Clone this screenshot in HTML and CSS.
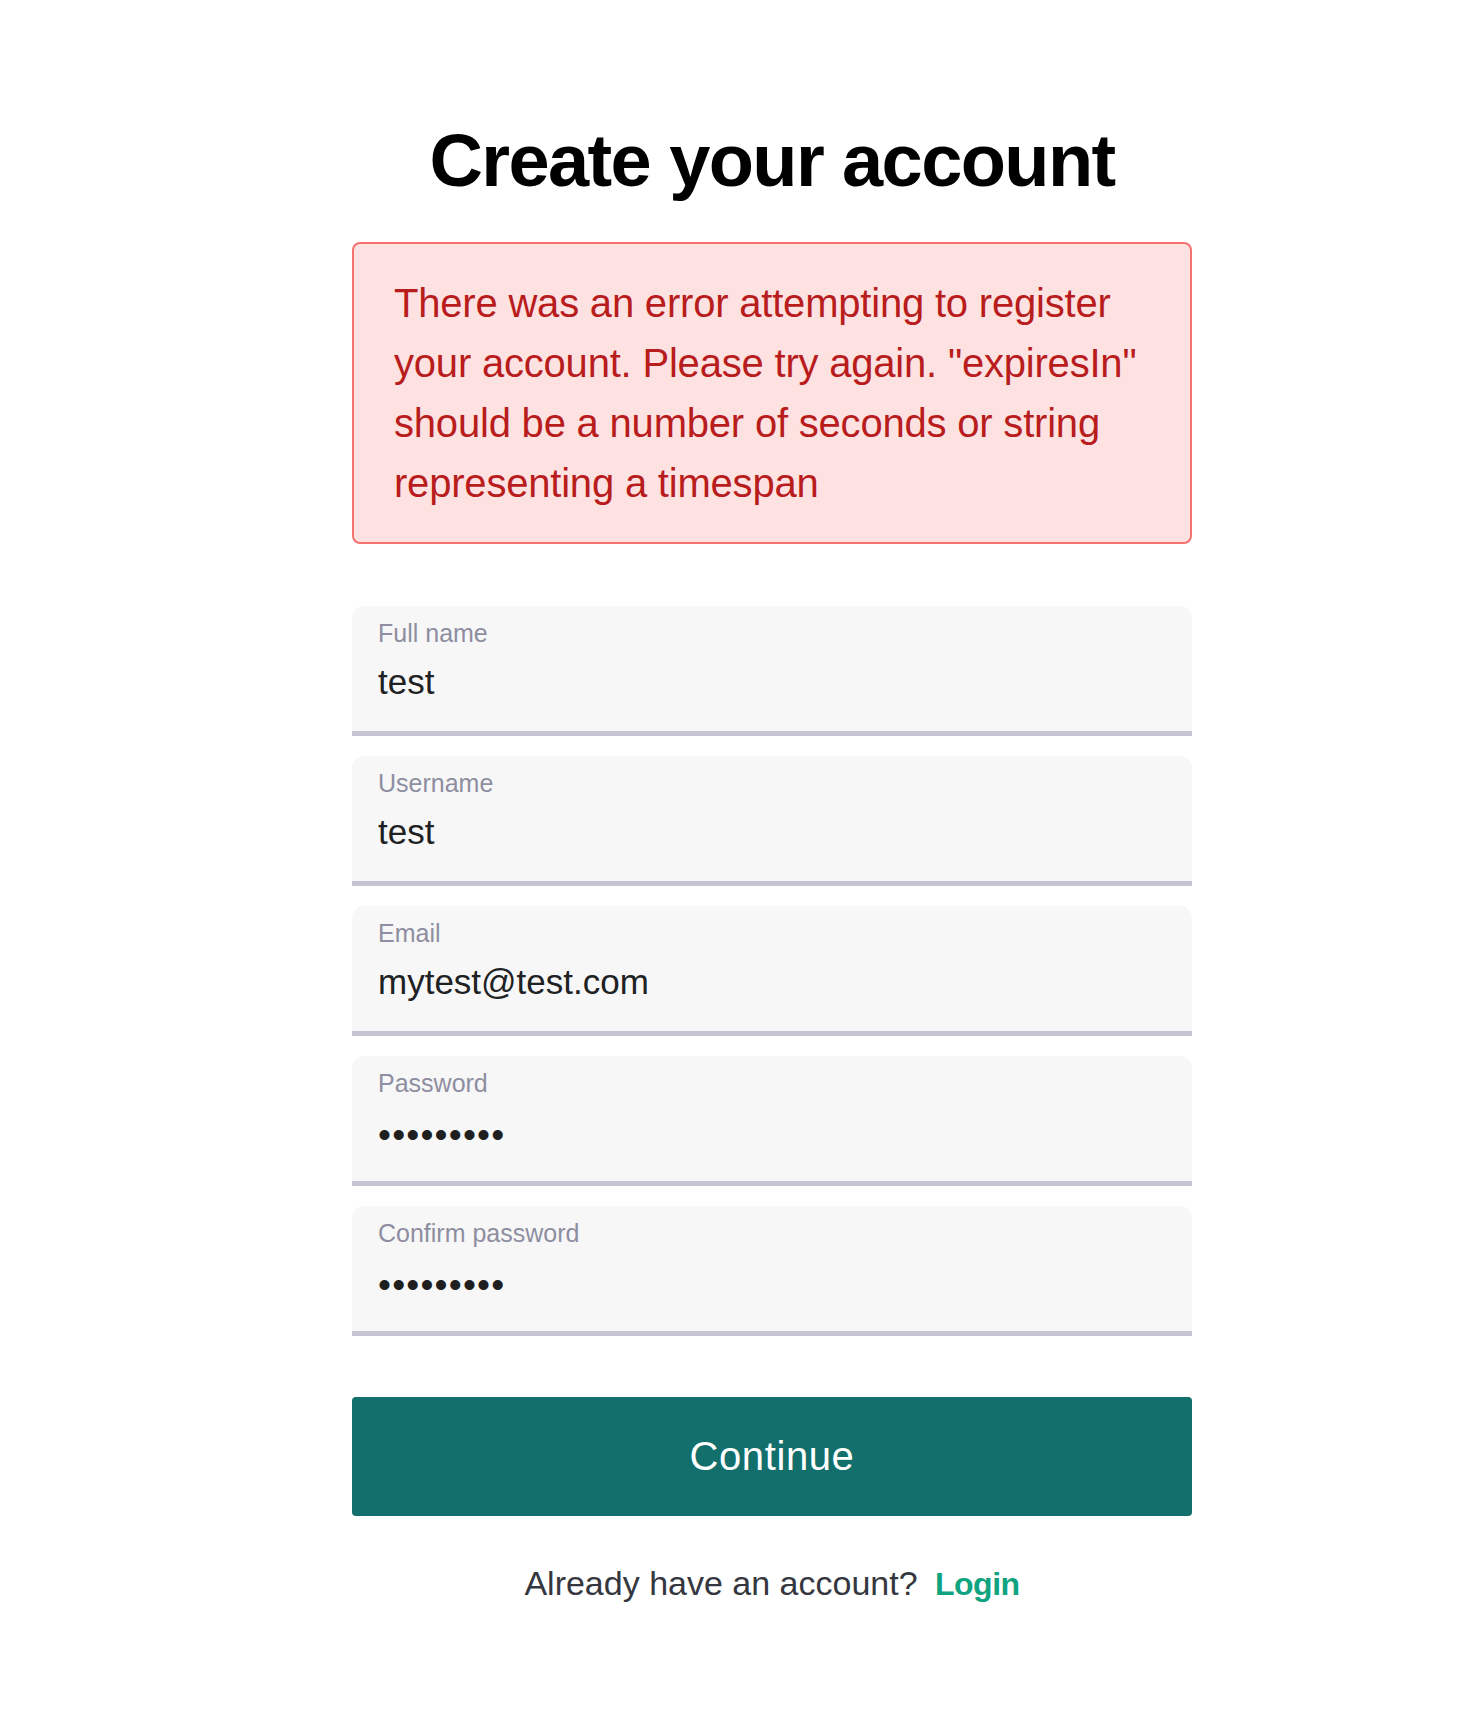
FILE: index.html
```html
<!DOCTYPE html>
<html lang="en">
<head>
<meta charset="utf-8">
<title>Create your account</title>
<link rel="stylesheet" href="styles.css">
</head>
<body>
<main class="page">
  <section class="signup">
    <h1 class="title">Create your account</h1>
    <div class="alert" role="alert">There was an error attempting to register your account. Please try again. "expiresIn" should be a number of seconds or string representing a timespan</div>
    <form class="form">
      <div class="field">
        <label class="field-label">Full name</label>
        <div class="field-value">test</div>
      </div>
      <div class="field">
        <label class="field-label">Username</label>
        <div class="field-value">test</div>
      </div>
      <div class="field">
        <label class="field-label">Email</label>
        <div class="field-value">mytest@test.com</div>
      </div>
      <div class="field">
        <label class="field-label">Password</label>
        <div class="field-value field-value--secret">•••••••••</div>
      </div>
      <div class="field">
        <label class="field-label">Confirm password</label>
        <div class="field-value field-value--secret">•••••••••</div>
      </div>
      <button type="button" class="submit">Continue</button>
    </form>
    <p class="switch">Already have an account? <a class="switch-link" href="#">Login</a></p>
  </section>
</main>
</body>
</html>
```
FILE: styles.css
```css
html, body {
  margin: 0;
  padding: 0;
  background: #ffffff;
}

body {
  font-family: "Liberation Sans", Arial, sans-serif;
  color: #202123;
}

.page {
  display: flex;
  justify-content: center;
  padding: 117px 0 0 76px;
}

.signup {
  width: 840px;
  display: flex;
  flex-direction: column;
}

.title {
  margin: 0;
  font-size: 74px;
  line-height: 88px;
  font-weight: 700;
  letter-spacing: -1.6px;
  text-align: center;
  color: #000000;
}

.alert {
  margin-top: 37px;
  padding: 29px 30px 29px 40px;
  border: 2px solid #f87171;
  border-radius: 8px;
  background: #fee2e2;
  color: #b91c1c;
  font-size: 40px;
  line-height: 60px;
  letter-spacing: -0.2px;
}

.form {
  margin: 62px 0 0;
  display: flex;
  flex-direction: column;
  gap: 20px;
}

.field {
  display: flex;
  flex-direction: column;
  padding: 12px 26px 28px;
  background: #f7f7f8;
  border-bottom: 5px solid #c5c5d2;
  border-radius: 12px 12px 0 0;
}

.field-label {
  font-size: 25px;
  line-height: 30px;
  color: #8e8ea0;
}

.field-value {
  margin-top: 13px;
  font-size: 35px;
  line-height: 42px;
  color: #202123;
}

.field-value--secret {
  margin-top: 16px;
  margin-bottom: -3px;
  font-size: 37px;
  letter-spacing: 1.2px;
  color: #1f1f1f;
}

.submit {
  margin-top: 41px;
  height: 119px;
  border: none;
  border-radius: 4px;
  background: #136f6b;
  color: #ffffff;
  font-family: "Liberation Sans", Arial, sans-serif;
  font-size: 40px;
  letter-spacing: 0.6px;
  cursor: pointer;
}

.switch {
  margin: 47px 0 0;
  text-align: center;
  font-size: 34px;
  line-height: 40px;
  color: #353740;
}

.switch-link {
  margin-left: 8px;
  color: #10a37f;
  font-size: 32px;
  font-weight: 700;
  letter-spacing: -0.5px;
  text-decoration: none;
}
```
